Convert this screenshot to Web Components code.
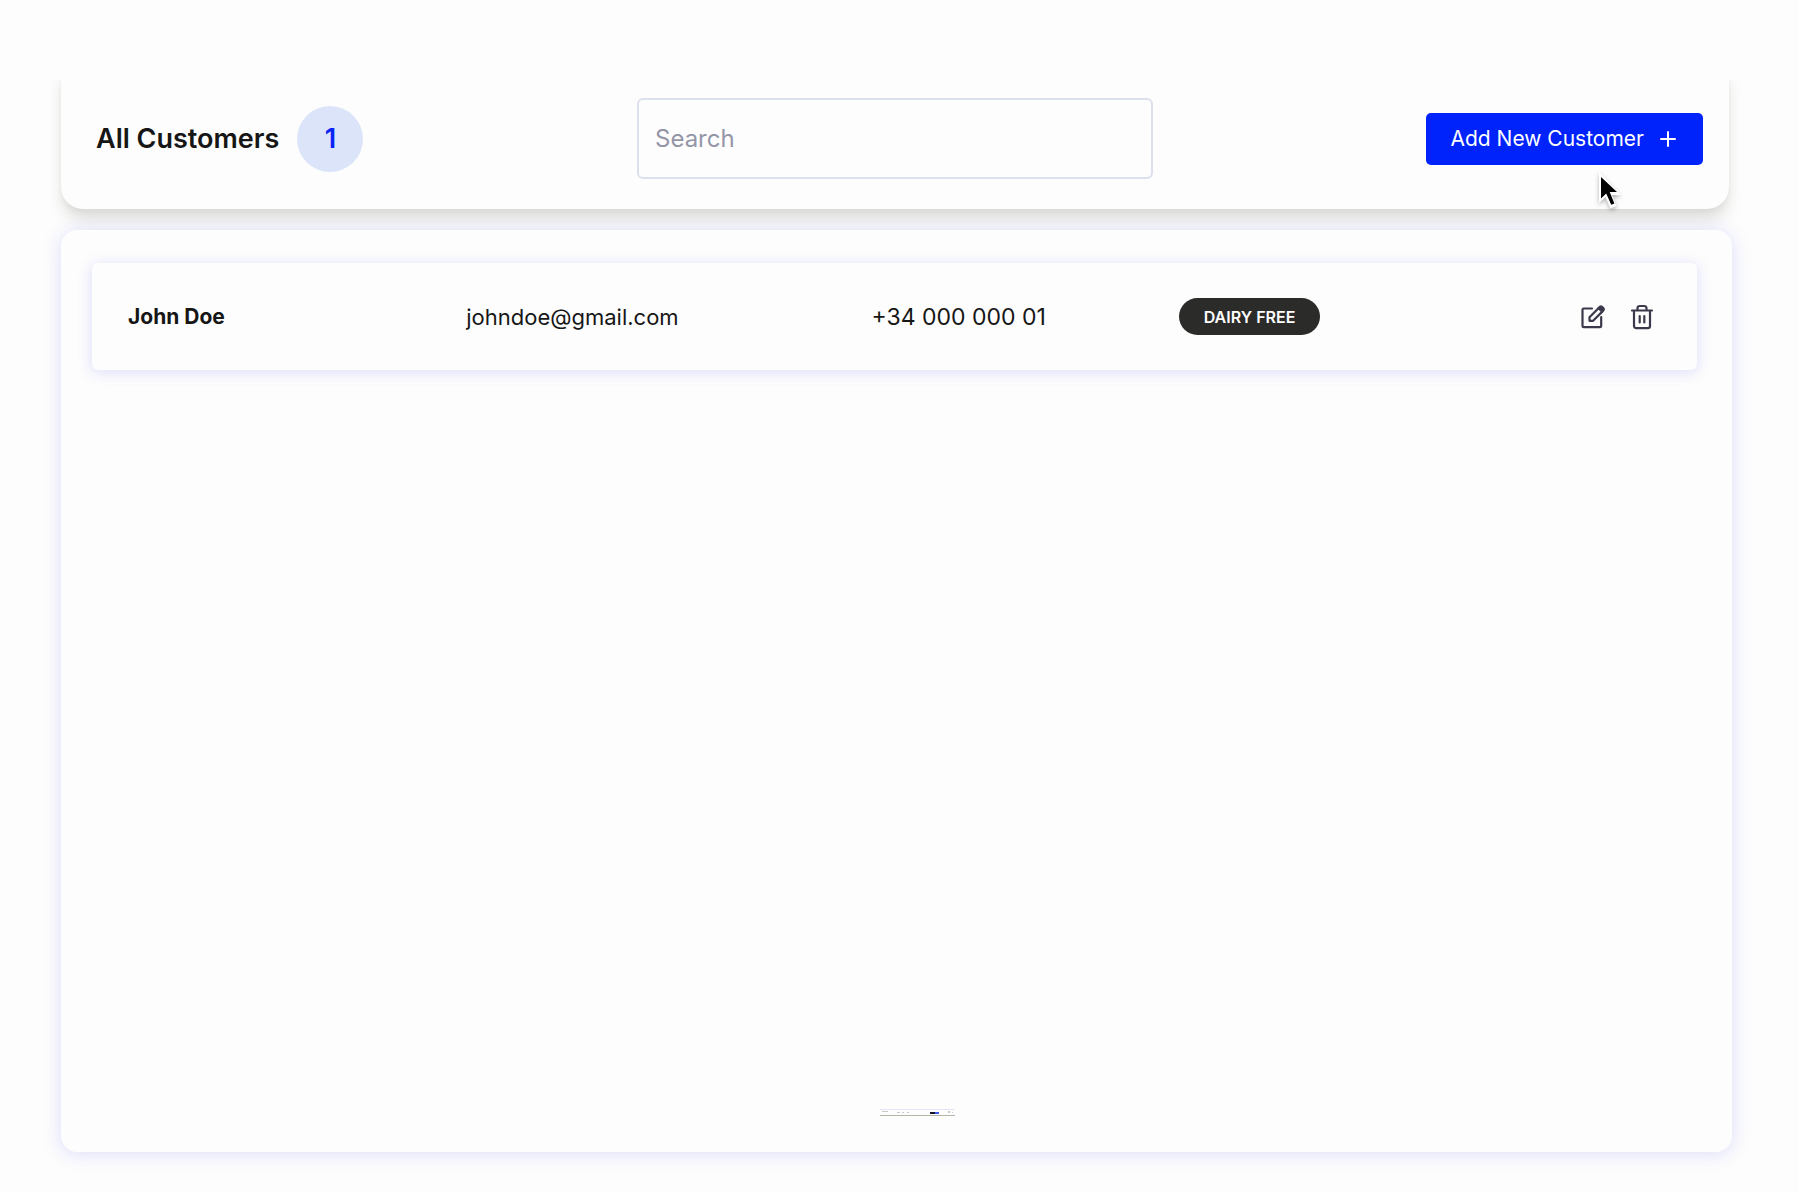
<!DOCTYPE html>
<html lang="en">
<head>
<meta charset="utf-8">
<title>All Customers</title>
<style>
  html { height: 100%; }
  body { margin: 0; min-height: 100%; display: flex; background: #fdfdfd; color: #161616; font-family: Inter, "Open Sans", sans-serif; }
</style>
</head>
<body>
<customers-page></customers-page>
<script>
const define = (name, html, setup) => customElements.define(name, class extends HTMLElement {
  constructor() {
    super();
    const t = document.createElement('template');
    t.innerHTML = html;
    this.attachShadow({ mode: 'open' }).append(t.content.cloneNode(true));
    if (setup) setup(this);
  }
});

define('count-badge', `
<style>
  :host { display: flex; align-items: center; justify-content: center; width: 66px; height: 66px; border-radius: 50%; background: #dce4fa; color: #0a24f5; font-size: 27px; font-weight: 600; }
</style><slot></slot>`);

define('search-field', `
<style>
  :host { display: block; }
  input { box-sizing: border-box; display: block; width: 100%; height: 81px; padding: 0 16px; border: 2px solid #dcdfee; border-radius: 6px; background: transparent; font: 400 24px Inter, sans-serif; color: #161616; outline: none; }
  input::placeholder { color: #9496a8; opacity: 1; }
</style>
<input type="search" placeholder="Search" aria-label="Search">`);

define('add-button', `
<style>
  :host { display: block; }
  button { display: flex; align-items: center; gap: 13px; height: 52px; padding: 0 24px; border: 0; border-radius: 5px; background: #0022fb; color: #fff; font: 400 21px Inter, sans-serif; white-space: nowrap; }
  svg { display: block; width: 22px; height: 22px; }
</style>
<button type="button"><slot></slot>
<svg viewBox="0 0 22 22" fill="none" stroke="currentColor" stroke-width="2" stroke-linecap="round" aria-hidden="true"><path d="M11 4v14M4 11h14"/></svg></button>`);

define('customer-toolbar', `
<style>
  :host { display: grid; grid-template-columns: 1fr 516px 1fr; align-items: center; box-sizing: border-box; height: 141px; padding: 0 26px; border-radius: 0 0 22px 22px; background: #fdfdfd; box-shadow: 0 12px 16px -2px rgba(40,40,20,.15), 0 3px 5px rgba(40,40,20,.04); }
  .title { display: flex; align-items: center; gap: 18px; padding-left: 9px; }
  h1 { margin: 0; font-size: 27px; line-height: 40px; font-weight: 600; white-space: nowrap; }
  add-button { justify-self: end; }
</style>
<div class="title"><h1>All Customers</h1><count-badge>1</count-badge></div>
<search-field></search-field>
<add-button>Add New Customer</add-button>`);

define('diet-tag', `
<style>
  :host { display: inline-flex; align-items: center; justify-content: center; box-sizing: border-box; height: 37px; padding: 0 25px; border-radius: 19px; background: #2b2b29; color: #fff; font-size: 16px; font-weight: 600; white-space: nowrap; }
</style><slot></slot>`);

define('row-actions', `
<style>
  :host { display: flex; gap: 23px; }
  button { display: block; padding: 0; border: 0; background: none; color: #3b394b; }
  svg { display: block; width: 26px; height: 26px; }
</style>
<button type="button" aria-label="Edit customer"><svg viewBox="0 0 26 26" fill="none" stroke="currentColor" stroke-width="2.200" stroke-linejoin="round" stroke-linecap="round"><path d="M12 4.500H3.700a1.200 1.200 0 0 0-1.200 1.200V22a1.200 1.200 0 0 0 1.200 1.200H20A1.200 1.200 0 0 0 21.200 22v-8.800"/><path d="M9.500 16.800v-3.600l9.200-9.200 3.600 3.600-9.200 9.200z"/><path fill="currentColor" d="m18.700 4 1.300-1.300q1-.8 1.900 0l1.600 1.600q.8 1 0 1.900l-1.300 1.400z"/></svg></button>
<button type="button" aria-label="Delete customer"><svg viewBox="0 0 26 26" fill="none" stroke="currentColor" stroke-width="2.200" stroke-linejoin="round" stroke-linecap="round"><path d="M3 6.500h20M8.500 6V4.200A2.200 2.200 0 0 1 10.700 2h4.600a2.200 2.200 0 0 1 2.200 2.200V6M5 6.500V22a2.200 2.200 0 0 0 2.200 2.200h11.600A2.200 2.200 0 0 0 21 22V6.500M10.700 12v6.500M15.300 12v6.500"/></svg></button>`);

define('customer-row', `
<style>
  :host { display: grid; grid-template-columns: 338fr 405fr 307fr 476fr; align-items: center; box-sizing: border-box; height: 107px; padding: 0 42px 0 36px; border-radius: 6px; background: #fdfdfd; box-shadow: 0 2px 14px 1px rgba(105,105,245,.2); }
  .name { font-size: 21px; font-weight: 700; }
  .email { font-size: 22px; }
  .phone { font-size: 23px; }
  .end { display: flex; align-items: center; justify-content: space-between; }
</style>
<div class="name"><slot name="name"></slot></div>
<div class="email"><slot name="email"></slot></div>
<div class="phone"><slot name="phone"></slot></div>
<div class="end"><slot name="tag"></slot><row-actions></row-actions></div>`);

define('customer-list', `
<style>
  :host { display: flex; flex-direction: column; justify-content: space-between; box-sizing: border-box; padding: 33px 35px 35px 31px; border-radius: 16px; background: #fdfdfd; box-shadow: 0 2px 18px 1px rgba(105,105,245,.2); }
  svg { display: block; align-self: center; width: 75px; height: 8px; margin-left: 46px; }
</style>
<slot></slot>
<svg viewBox="0 0 75 8" aria-hidden="true"><path fill="#e4e4f8" d="M0 0h75v1H0z"/><path fill="#b5b5a8" d="M0 6h75v1H0z"/><path fill="#c8c8c4" d="M2 2h6v1H2zM17 3h3v1h-3zM22 3h2v1h-2zM27 3h2v1h-2zM68 2h2v2h-2zM72 3h1v1h-1z"/><path fill="#15152a" d="M50 3h5v2h-5z"/><path fill="#4058f0" d="M55 3h4v2h-4z"/></svg>`);

define('mouse-pointer', `
<style>
  :host { position: absolute; left: 1594px; top: 170px; width: 30px; height: 42px; pointer-events: none; }
  svg { display: block; filter: drop-shadow(0 2px 2px rgba(0,0,0,.3)); }
</style>
<svg width="30" height="42" viewBox="0 0 30 42" aria-hidden="true"><path fill="#fff" d="M5 2v31l6.500-6 5 11.500 6-2.500-4.600-11H27z"/><path fill="#000" d="M7 7v21.500l5.200-5 5 11.300 3.200-1.400L15.700 22H23z"/></svg>`);

define('customers-page', `
<style>
  :host { flex: 1; display: flex; flex-direction: column; gap: 21px; box-sizing: border-box; min-height: 100vh; padding: 68px 66px 40px 61px; }
  customer-toolbar { margin-right: 3px; clip-path: inset(12px -30px -40px -30px); }
  customer-list { flex: 1; position: relative; }
</style>
<customer-toolbar></customer-toolbar>
<customer-list>
  <customer-row>
    <span slot="name">John Doe</span>
    <span slot="email">johndoe@gmail.com</span>
    <span slot="phone">+34 000 000 01</span>
    <diet-tag slot="tag">DAIRY FREE</diet-tag>
  </customer-row>
</customer-list>
<mouse-pointer></mouse-pointer>`);
</script>
</body>
</html>
